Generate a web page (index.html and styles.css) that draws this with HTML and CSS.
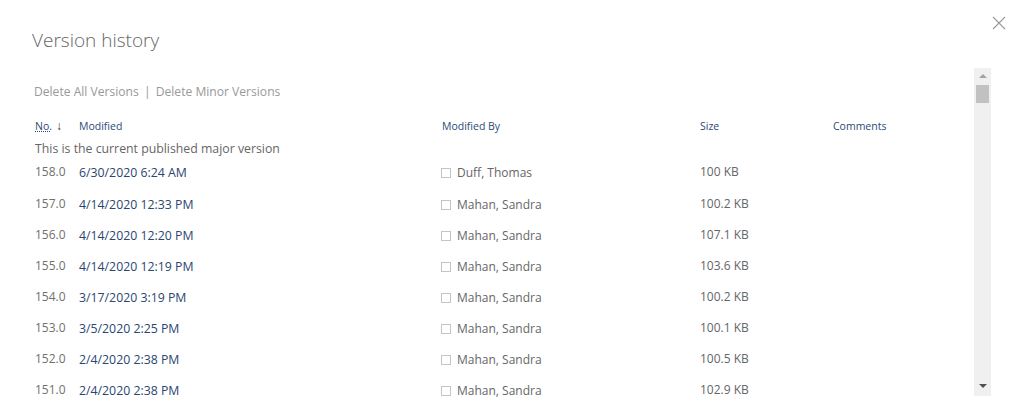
FILE: index.html
```html
<!DOCTYPE html>
<html lang="en">
<head>
<meta charset="utf-8">
<title>Version history</title>
<link rel="stylesheet" href="styles.css">
</head>
<body>
<div class="dialog">
  <button class="close" aria-label="Close">
    <svg width="14" height="14" viewBox="0 0 14 14"><path d="M1 1L13 13M13 1L1 13" stroke="#9a9a9a" stroke-width="1.1" fill="none"/></svg>
  </button>
  <h1 class="title">Version history</h1>
  <div class="scroll">
    <div class="content">
      <div class="actions"><a class="action">Delete All Versions</a> <span class="sep">|</span> <a class="action">Delete Minor Versions</a></div>
      <div class="row head">
        <div><span class="no">No.</span><span class="arrow">&#8595;</span></div>
        <div>Modified</div>
        <div>Modified By</div>
        <div>Size</div>
        <div>Comments</div>
      </div>
      <div class="current">This is the current published major version</div>
      <div class="row data first">
        <div class="num">158.0</div><div class="date">6/30/2020 6:24 AM</div><div class="user"><span class="box"></span>Duff, Thomas</div><div class="size">100 KB</div><div></div>
      </div>
      <div class="row data">
        <div class="num">157.0</div><div class="date">4/14/2020 12:33 PM</div><div class="user"><span class="box"></span>Mahan, Sandra</div><div class="size">100.2 KB</div><div></div>
      </div>
      <div class="row data">
        <div class="num">156.0</div><div class="date">4/14/2020 12:20 PM</div><div class="user"><span class="box"></span>Mahan, Sandra</div><div class="size">107.1 KB</div><div></div>
      </div>
      <div class="row data">
        <div class="num">155.0</div><div class="date">4/14/2020 12:19 PM</div><div class="user"><span class="box"></span>Mahan, Sandra</div><div class="size">103.6 KB</div><div></div>
      </div>
      <div class="row data">
        <div class="num">154.0</div><div class="date">3/17/2020 3:19 PM</div><div class="user"><span class="box"></span>Mahan, Sandra</div><div class="size">100.2 KB</div><div></div>
      </div>
      <div class="row data">
        <div class="num">153.0</div><div class="date">3/5/2020 2:25 PM</div><div class="user"><span class="box"></span>Mahan, Sandra</div><div class="size">100.1 KB</div><div></div>
      </div>
      <div class="row data">
        <div class="num">152.0</div><div class="date">2/4/2020 2:38 PM</div><div class="user"><span class="box"></span>Mahan, Sandra</div><div class="size">100.5 KB</div><div></div>
      </div>
      <div class="row data">
        <div class="num">151.0</div><div class="date">2/4/2020 2:38 PM</div><div class="user"><span class="box"></span>Mahan, Sandra</div><div class="size">102.9 KB</div><div></div>
      </div>
    </div>
    <div class="scrollbar">
      <div class="arrow-up"></div>
      <div class="thumb"></div>
      <div class="track"></div>
      <div class="arrow-down"></div>
    </div>
  </div>
</div>
</body>
</html>
```
FILE: styles.css
```css
* { box-sizing: border-box; }
html, body { margin: 0; padding: 0; background: #fff; }
body {
  font-family: "Open Sans", "Noto Sans", sans-serif;
  color: #666;
  width: 1023px;
  height: 418px;
  overflow: hidden;
}
.dialog {
  position: relative;
  padding: 26px 32px 0 32px;
}
.close {
  position: absolute;
  top: 16px;
  right: 17px;
  width: 14px;
  height: 14px;
  padding: 0;
  border: 0;
  background: none;
  display: block;
}
.close svg { display: block; }
.title {
  margin: 0;
  font-size: 19px;
  font-weight: 300;
  line-height: 28px;
  color: #666;
}
.scroll {
  margin-top: 14px;
  height: 328px;
  display: flex;
}
.content {
  flex: 1;
  padding: 15px 0 0 2px;
}
.actions {
  font-size: 12.1px;
  line-height: 18px;
  color: #999;
}
.sep { margin: 0 2px; }
.row {
  display: grid;
  grid-template-columns: 44px 363px 258px 133px 1fr;
  margin-left: 1px;
}
.head {
  margin-top: 17px;
  font-size: 10.5px;
  line-height: 16px;
  color: #2b4a77;
}
.no { text-decoration: underline dotted #2b4a77; }
.arrow { color: #333; font-size: 12px; margin-left: 4px; }
.current {
  margin-top: 5px;
  margin-left: 1px;
  font-size: 12.3px;
  line-height: 20px;
  color: #666;
}
.data {
  height: 31px;
  align-items: center;
  font-size: 12px;
}
.data.first { height: 30px; padding-bottom: 3px; }
.num { color: #707070; padding-bottom: 3px; }
.date { color: #2a4670; font-size: 12.3px; }
.user { color: #666; display: flex; align-items: center; }
.box {
  width: 10px;
  height: 10px;
  border: 1px solid #c4c4c4;
  margin: 0 6px 0 -1px;
  flex: none;
}
.size { color: #666; padding-bottom: 3px; }
.scrollbar {
  width: 17px;
  flex: none;
  background: #f0f0f0;
  display: flex;
  flex-direction: column;
  align-items: center;
}
.arrow-up {
  margin-top: 6px;
  width: 0; height: 0;
  border-left: 4px solid transparent;
  border-right: 4px solid transparent;
  border-bottom: 4px solid #a3a3a3;
}
.thumb {
  margin-top: 7px;
  width: 13px;
  height: 18px;
  background: #c1c1c1;
}
.track { flex: 1; }
.arrow-down {
  margin-bottom: 8px;
  width: 0; height: 0;
  border-left: 4px solid transparent;
  border-right: 4px solid transparent;
  border-top: 4px solid #505050;
}
```
